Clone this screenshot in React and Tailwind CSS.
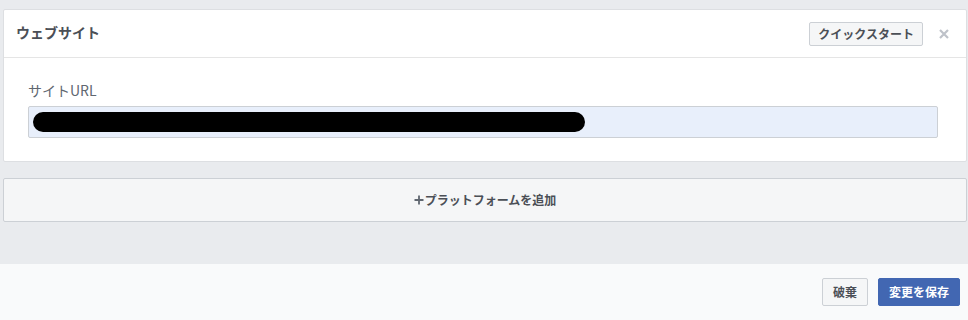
export default function App() {
  return (
    <div
      className="flex h-[320px] w-[968px] flex-col bg-[#e9ebee] text-[#4b4f56]"
      style={{ fontFamily: '"Noto Sans CJK JP", "Noto Sans", Roboto, sans-serif' }}
    >
      <div className="flex-1 px-[3px] pt-[9px]">
        {/* Website card */}
        <div className="w-[964px] rounded-[2px] border border-[#dddfe2] bg-white">
          <div className="flex h-[48px] items-center justify-between border-b border-[#e5e5e5] pl-[12px] pr-[17px]">
            <span className="mb-[4px] text-[14px] font-bold leading-none">ウェブサイト</span>
            <div className="flex items-center gap-[16px]">
              <button
                type="button"
                className="h-[24px] rounded-[2px] border border-[#ccd0d5] bg-[#f5f6f7] px-[8px] text-[12px] font-bold leading-none text-[#4b4f56]"
              >
                クイックスタート
              </button>
              <svg width="10" height="10" viewBox="0 0 10 10" className="text-[#bec2c9]">
                <path d="M1 1L9 9M9 1L1 9" stroke="currentColor" strokeWidth="2.2" />
              </svg>
            </div>
          </div>
          <div className="px-[24px] pb-[23px] pt-[23px]">
            <div className="mb-[7px] text-[14px] leading-[18px] text-[#606770]">サイトURL</div>
            <div className="flex h-[32px] w-[910px] items-center rounded-[2px] border border-[#ccd0d5] bg-[#e8effb] px-[4px]">
              <div className="h-[20px] w-[552px] rounded-full bg-black" />
            </div>
          </div>
        </div>

        {/* Add platform */}
        <button
          type="button"
          className="mt-[16px] flex h-[44px] w-[964px] items-center justify-center rounded-[2px] border border-[#ccd0d5] bg-[#f5f6f7] text-[12px] font-bold text-[#4b4f56]"
        >
          <svg width="10" height="10" viewBox="0 0 10 10" className="mr-[1px] text-[#606770]">
            <path d="M5 0.5V9.5M0.5 5H9.5" stroke="currentColor" strokeWidth="1.8" />
          </svg>
          プラットフォームを追加
        </button>
      </div>

      {/* Footer */}
      <div className="flex h-[56px] items-center justify-end gap-[10px] bg-[#f9fafb] pr-[8px]">
        <button
          type="button"
          className="h-[28px] rounded-[2px] border border-[#ccd0d5] bg-[#f5f6f7] px-[10px] text-[12px] font-bold text-[#4b4f56]"
        >
          破棄
        </button>
        <button
          type="button"
          className="h-[28px] rounded-[2px] border border-[#4267b2] bg-[#4267b2] px-[10px] text-[12px] font-bold text-white"
        >
          変更を保存
        </button>
      </div>
    </div>
  )
}
